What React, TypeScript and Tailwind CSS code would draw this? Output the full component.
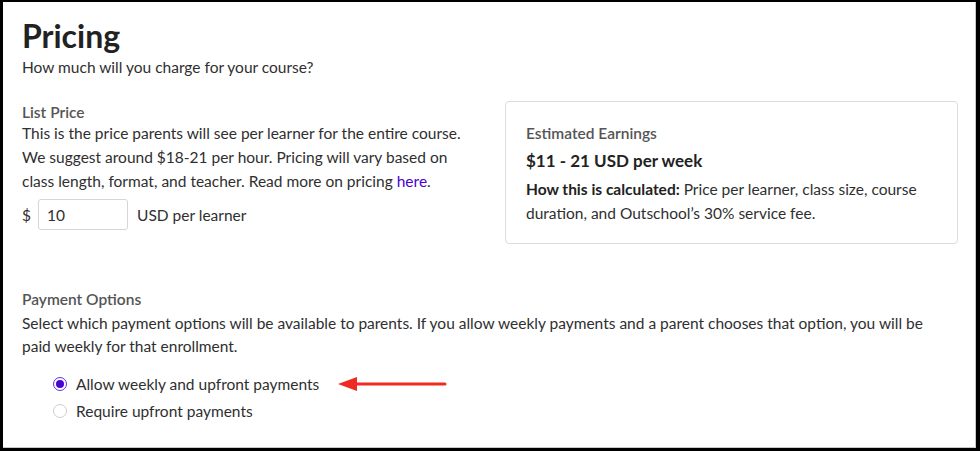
export default function App() {
  return (
    <div
      className="h-[451px] w-[980px] overflow-hidden bg-black pl-[3px] pt-[2px] pr-[4px] pb-[3px]"
      style={{ fontFamily: "Lato, 'Liberation Sans', sans-serif" }}
    >
      <div className="h-full w-full bg-white pl-[19px] pr-[16px] pt-[16px] text-[15.5px] leading-6 text-[#2f2f2f] shadow-[inset_-1px_-1px_0_#c8c8c8]">
        <h1 className="text-[32px] font-bold leading-9 text-[#222]">Pricing</h1>
        <p className="mt-[1px]">How much will you charge for your course?</p>

        <div className="mt-[21px] flex items-start">
          <div className="w-[463px] whitespace-nowrap">
            <h2 className="font-semibold text-[#555]">List Price</h2>
            <p className="mt-[-3px]">
              This is the price parents will see per learner for the entire course.
              <br />
              We suggest around $18-21 per hour. Pricing will vary based on
              <br />
              class length, format, and teacher. Read more on pricing{" "}
              <a className="text-[#4b01d4]">here</a>.
            </p>
            <div className="mt-[6px] flex items-center">
              <span>$</span>
              <div className="ml-[7px] flex h-[31px] w-[90px] items-center rounded-[3px] border border-[#d6d6d6] px-[8px]">
                10
              </div>
              <span className="ml-[9px]">USD per learner</span>
            </div>
          </div>

          <div className="ml-[20px] mt-[1px] h-[143px] w-[453px] rounded-[4px] border border-[#dcdcdc] px-[20px] pt-[19px]">
            <p className="font-semibold text-[#555]">Estimated Earnings</p>
            <p className="mt-[4px] text-[17px] font-bold text-[#222]">$11 - 21 USD per week</p>
            <p className="mt-[4px]">
              <span className="font-bold text-[#222]">How this is calculated:</span> Price
              per learner, class size, course
              <br />
              duration, and Outschool’s 30% service fee.
            </p>
          </div>
        </div>

        <h2 className="mt-[43px] font-semibold text-[#555]">Payment Options</h2>
        <p className="mt-[1px] whitespace-nowrap leading-[23px]">
          Select which payment options will be available to parents. If you allow weekly
          payments and a parent chooses that option, you will be
          <br />
          paid weekly for that enrollment.
        </p>

        <div className="mt-[14px] flex flex-col gap-[3px] pl-[31px]">
          <label className="flex items-center">
            <span className="flex h-[14px] w-[14px] items-center justify-center rounded-full border border-[#5f2ff1]">
              <span className="h-[8px] w-[8px] rounded-full bg-[#4b01d4]" />
            </span>
            <span className="ml-[9px]">Allow weekly and upfront payments</span>
            <svg className="ml-[18px]" width="110" height="16" viewBox="0 0 110 16">
              <path d="M18 8 H108" stroke="#ef2a22" strokeWidth="3" strokeLinecap="round" />
              <path d="M1 8 L20 1 L20 15 Z" fill="#ef2a22" />
            </svg>
          </label>
          <label className="flex items-center">
            <span className="h-[14px] w-[14px] rounded-full border border-[#cfcfcf]" />
            <span className="ml-[9px]">Require upfront payments</span>
          </label>
        </div>
      </div>
    </div>
  );
}
